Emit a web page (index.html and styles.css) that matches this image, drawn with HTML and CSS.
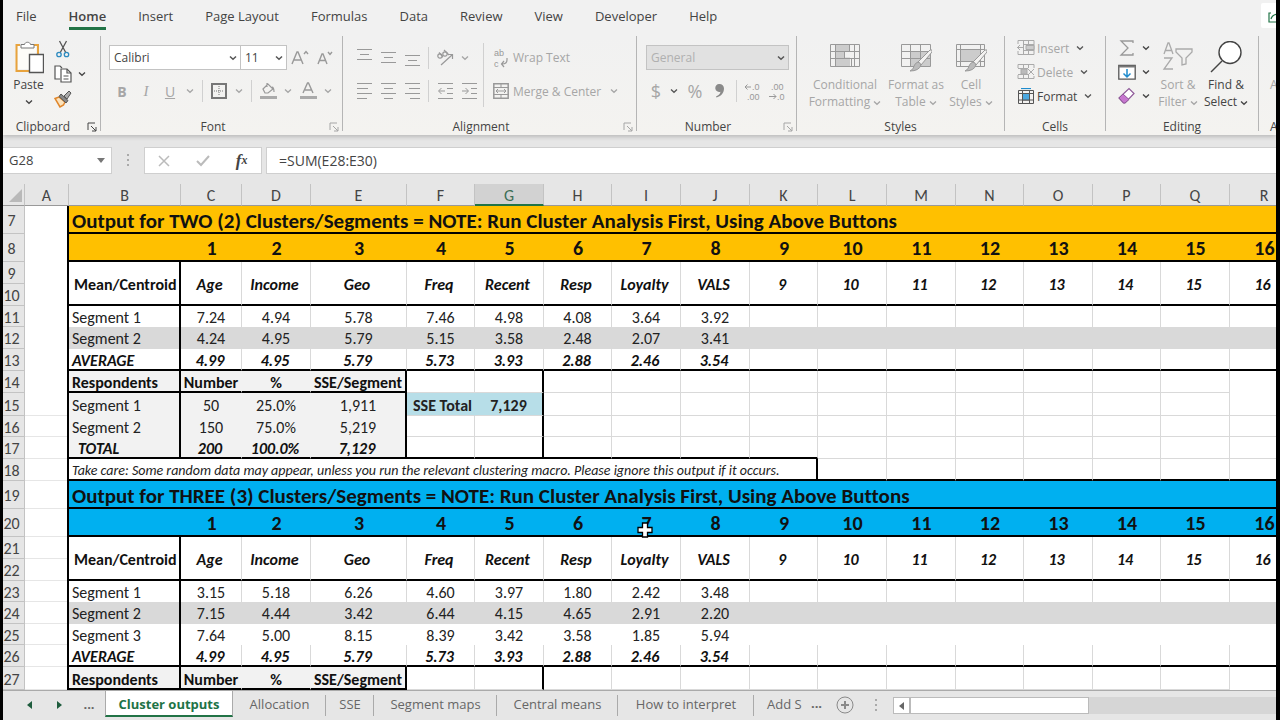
FILE: index.html
```html
<!DOCTYPE html>
<html lang="en">
<head>
<meta charset="utf-8">
<title>Cluster outputs</title>
<link rel="stylesheet" href="styles.css">
</head>
<body>
<svg class="defs" aria-hidden="true">
  <symbol id="chev" viewBox="0 0 8 6"><path d="M1 1.500 4 4.300 7 1.500" fill="none" stroke="currentColor" stroke-width="1.300"/></symbol>
  <symbol id="launch" viewBox="0 0 10 10"><path d="M1 8V1h7M4 4l5 5M9 5v4H5" fill="none" stroke="currentColor"/></symbol>
</svg>

<nav class="tabs">
  <a href="#">File</a><a href="#" class="on">Home</a><a href="#">Insert</a><a href="#">Page Layout</a><a href="#">Formulas</a><a href="#">Data</a><a href="#">Review</a><a href="#">View</a><a href="#">Developer</a><a href="#">Help</a>
  <button class="share" aria-label="Share"><svg width="14" height="14" viewBox="0 0 14 14" fill="none" stroke="#217346" stroke-width="1.2"><path d="M3 4H1v9h12M3 10c1-4 4-5 8-5M9 2l3 3-3 3"/></svg></button>
</nav>

<section class="ribbon">
  <div class="group g-clip">
    <div class="tools across">
      <button class="big paste">
        <svg width="30" height="34" viewBox="0 0 30 34" fill="none"><path d="M6 4H2.500v26H15M20 4h4v9" stroke="#e8a33d" stroke-width="2"/><path d="M4 5h18v8h-7v15H4z" fill="#fdfcf8"/><path d="M7 7V3.500h3.500C11 .5 16 .5 16.500 3.500H20V7z" fill="#fff" stroke="#777"/><path d="M15.500 13.500h14v18h-14z" fill="#fff" stroke="#555" stroke-width="1.400"/></svg>
        <span>Paste</span><svg class="chev"><use href="#chev"/></svg>
      </button>
      <div class="stack">
        <button aria-label="Cut"><svg width="18" height="18" viewBox="0 0 18 18" fill="none"><path d="M5.500 1 12 13M12.500 1 6 13" stroke="#555" stroke-width="1.300"/><circle cx="5" cy="14.500" r="2.200" stroke="#2e8bc0" stroke-width="1.300"/><circle cx="12.500" cy="14.500" r="2.200" stroke="#2e8bc0" stroke-width="1.300"/></svg></button>
        <button aria-label="Copy"><svg width="18" height="18" viewBox="0 0 18 18" fill="#fff" stroke="#555" stroke-width="1.200"><path d="M6 14H1V1h5l2 2"/><path d="M7 4h6l4 4v9H7z"/><path d="M13 4v4h4M9.500 11h5M9.500 14h5" fill="none"/></svg><svg class="chev"><use href="#chev"/></svg></button>
        <button aria-label="Format Painter"><svg width="18" height="18" viewBox="0 0 18 18"><path d="M1 8.500 5 7l6 5-1.500 3L6 17z" fill="#fbe3bd" stroke="#e0862b" stroke-width="1.500"/><path d="m5 6.500 2-2.500 7 6.500-2 2.500z" fill="#888" stroke="#555"/><path d="m10 6 5-5 2 2-4 6z" fill="#aaa" stroke="#555"/></svg></button>
      </div>
    </div>
    <div class="caption"><span>Clipboard</span><button aria-label="Clipboard options"><svg><use href="#launch"/></svg></button></div>
  </div>

  <div class="group g-font">
    <div class="tools rows">
      <div class="row pull">
        <select class="sel face" aria-label="Font"><option>Calibri</option></select><select class="sel size" aria-label="Font size"><option>11</option></select>
        <button class="w26 dim" aria-label="Increase font size"><svg width="18" height="18" viewBox="0 0 18 18" fill="none" stroke="#999" stroke-width="1.400"><path d="M1 15 6 3h1l5 12M3 11h7M13 5l2-2.500L17 5"/></svg></button><button class="w24 dim" aria-label="Decrease font size"><svg width="18" height="18" viewBox="0 0 18 18" fill="none" stroke="#999" stroke-width="1.400"><path d="M2 15 6 5h1l4 10M3.500 11.500h6M12 3l2 2.500L16 3"/></svg></button>
      </div>
      <div class="row dim">
        <button class="w24 b">B</button><button class="w24 i">I</button><button class="w24 u">U</button><button class="w16" aria-label="Underline styles"><svg class="chev"><use href="#chev"/></svg></button><i class="sep"></i>
        <button class="w24" aria-label="Borders"><svg width="16" height="16" viewBox="0 0 16 16" fill="none" stroke="#777"><path d="M1 1h14v14H1z" stroke-width="2"/><path d="M8 3v10M3 8h10" stroke-dasharray="1 1"/></svg></button><button class="w16" aria-label="Border styles"><svg class="chev"><use href="#chev"/></svg></button><i class="sep"></i>
        <button class="w24" aria-label="Fill color"><svg width="18" height="18" viewBox="0 0 18 18" fill="none" stroke="#999" stroke-width="1.200"><path d="m4 7 5-5 5 5-5 4H6zM8 1v4M13 5c2 0 2 2 2 5"/><path d="M1 15.500h17" stroke="#aaa" stroke-width="3"/></svg></button><button class="w16" aria-label="Fill colors"><svg class="chev"><use href="#chev"/></svg></button>
        <button class="w24" aria-label="Font color"><svg width="18" height="18" viewBox="0 0 18 18" fill="none" stroke="#999"><path d="m4 11 4.500-10h1L14 11M6 8h6.500" stroke-width="1.400"/><path d="M1 15.500h17" stroke="#aaa" stroke-width="3"/></svg></button><button class="w16" aria-label="Font colors"><svg class="chev"><use href="#chev"/></svg></button>
      </div>
    </div>
    <div class="caption"><span>Font</span><button class="dim" aria-label="Font options"><svg><use href="#launch"/></svg></button></div>
  </div>

  <div class="group g-align">
    <div class="tools across dim">
      <div class="rows half">
        <div class="row">
          <button class="w24" aria-label="Top align"><svg class="ln"><path d="M0 1.500h15M3 6.500h9M0 11.500h15"/></svg></button><button class="w24" aria-label="Middle align"><svg class="ln"><path d="M0 4.500h15M3 9.500h9M0 14.500h15"/></svg></button><button class="w24" aria-label="Bottom align"><svg class="ln"><path d="M0 7.500h15M3 12.500h9M0 17.500h15"/></svg></button><i class="sep"></i>
          <button class="w24" aria-label="Orientation"><svg width="18" height="18" viewBox="0 0 18 18" fill="none" stroke="#999" stroke-width="1.200"><circle cx="4" cy="7" r="2.200"/><path d="M3 3.500 7 8M8 1l5 5"/><circle cx="9" cy="5" r="2.200"/><path d="M5 16 16 6M12 5.500h4.500V10"/></svg></button><button class="w16" aria-label="Orientations"><svg class="chev"><use href="#chev"/></svg></button>
        </div>
        <div class="row">
          <button class="w24" aria-label="Align left"><svg class="ln"><path d="M0 2.500h15M0 7.500h11M0 12.500h15M0 17.500h10"/></svg></button><button class="w24" aria-label="Center"><svg class="ln"><path d="M0 2.500h15M3 7.500h9M0 12.500h15M3 17.500h9"/></svg></button><button class="w24" aria-label="Align right"><svg class="ln"><path d="M0 2.500h15M4 7.500h11M0 12.500h15M5 17.500h10"/></svg></button><i class="sep"></i>
          <button class="w24" aria-label="Decrease indent"><svg class="ln"><path d="M0 2.500h15M9 7.500h6M9 12.500h6M0 17.500h15M7 10H1M3.500 7 .5 10l3 3"/></svg></button><button class="w24" aria-label="Increase indent"><svg class="ln"><path d="M0 2.500h15M9 7.500h6M9 12.500h6M0 17.500h15M0 10h6M3.500 7l3 3-3 3"/></svg></button>
        </div>
      </div>
      <i class="sep tall"></i>
      <div class="rows">
        <div class="row"><button class="labelled"><svg width="16" height="24" viewBox="0 0 16 24"><text x="1" y="10" class="tiny">ab</text><text x="1" y="21" class="tiny">c</text><path d="M14 12v2q0 4-5 4M11 15l-2.500 3 2.500 3" fill="none" stroke="#999" stroke-width="1.200"/></svg>Wrap Text</button></div>
        <div class="row"><button class="labelled"><svg width="16" height="16" viewBox="0 0 16 16" fill="none" stroke="#999"><path d="M.8.8h14.400v14.400H.8z" stroke-width="1.500"/><path d="M0 4.500h16M0 11.500h16M8 0v4.500M8 11.500V16M3 8h10M5 6 3 8l2 2M11 6l2 2-2 2"/></svg>Merge &amp; Center<svg class="chev"><use href="#chev"/></svg></button></div>
      </div>
    </div>
    <div class="caption"><span>Alignment</span><button class="dim" aria-label="Alignment options"><svg><use href="#launch"/></svg></button></div>
  </div>

  <div class="group g-num">
    <div class="tools rows">
      <div class="row"><select class="sel format" aria-label="Number format" disabled><option>General</option></select></div>
      <div class="row dim">
        <button class="w20 money">$</button><button class="w16 dark" aria-label="Currencies"><svg class="chev"><use href="#chev"/></svg></button><button class="w26 money">%</button>
        <button class="w24" aria-label="Comma style"><svg width="10" height="14" viewBox="0 0 10 14"><path d="M4.500 0a4 4 0 1 0 1 7.800Q5 11 1 12.500l.5 1C7 12 9 8 9 4.500A4.500 4.500 0 0 0 4.500 0z" fill="#8a8a8a"/></svg></button><i class="sep"></i>
        <button class="w24" aria-label="Increase decimal"><svg width="18" height="22" viewBox="0 0 18 22"><text x="8" y="10" class="tiny">.0</text><text x="3" y="20" class="tiny">.00</text><path d="M7 7H1M3.500 4.500 1 7l2.500 2.500" fill="none" stroke="#999"/></svg></button><button class="w24" aria-label="Decrease decimal"><svg width="18" height="22" viewBox="0 0 18 22"><text x="3" y="10" class="tiny">.00</text><text x="9" y="20" class="tiny">.0</text><path d="M1 16.500h7M5.500 14l2.500 2.500L5.500 19" fill="none" stroke="#999"/></svg></button>
      </div>
    </div>
    <div class="caption"><span>Number</span><button class="dim" aria-label="Number options"><svg><use href="#launch"/></svg></button></div>
  </div>

  <div class="group g-style">
    <div class="tools across dim">
      <button class="big w84"><svg width="32" height="34" viewBox="0 0 32 34" fill="none" stroke="#999"><path d="M6 4h14v6.500h-5v6H21V25H6z" fill="#ccc" stroke="none"/><path d="M1.500 3.500h29v22h-29zM1.500 10.500h29M1.500 17.500h29M6.500 3v22M20.500 3v7.500M15.500 10.500v7M22.500 17.500v8M25.500 3v22"/></svg><span>Conditional</span><span>Formatting <svg class="chev"><use href="#chev"/></svg></span></button>
      <button class="big w58"><svg width="32" height="34" viewBox="0 0 32 34" fill="none" stroke="#999"><path d="M11 10h19v15H11z" fill="#ccc" stroke="none"/><path d="M1.500 3.500h29v22h-29zM1.500 10.500h29M1.500 17.500h29M10.500 3v22M20.500 3v22"/><path d="M18 21 30 9q3-1 2 2L21 24z" fill="#f3f2f1"/><path d="M18 21q2 0 3 3-2 6-11 6 4-2 4-5 1-3 4-4z" fill="#bbb"/></svg><span>Format as</span><span>Table <svg class="chev"><use href="#chev"/></svg></span></button>
      <button class="big w52"><svg width="32" height="34" viewBox="0 0 32 34" fill="none" stroke="#999"><path d="M6 8h20v12H6z" fill="#ccc" stroke="none"/><path d="M1.500 3.500h28v22h-28zM1.500 8.500h28M1.500 20.500h28M5.500 3v22M25.500 3v22"/><path d="M18 21 30 9q3-1 2 2L21 24z" fill="#f3f2f1"/><path d="M18 21q2 0 3 3-2 6-11 6 4-2 4-5 1-3 4-4z" fill="#bbb"/></svg><span>Cell</span><span>Styles <svg class="chev"><use href="#chev"/></svg></span></button>
    </div>
    <div class="caption"><span>Styles</span></div>
  </div>

  <div class="group g-cells">
    <div class="tools stack">
      <button class="labelled dim"><svg width="18" height="16" viewBox="0 0 18 16" fill="none" stroke="#aaa"><path d="M1 4V.5h16v14H1V11M6.500 1v14M11.500 1v14M7 4.500h10M7 10.500h10"/><path d="M9 5.500h8v4H9z" fill="#ccc"/><path d="M7 7.500H0M3 5 .5 7.500 3 10"/></svg>Insert<svg class="chev dark"><use href="#chev"/></svg></button>
      <button class="labelled dim"><svg width="18" height="16" viewBox="0 0 18 16" fill="none" stroke="#aaa"><path d="M1 4V.5h16V4M1 11v3.500h16V12M6.500 1v14M11.500 1v3M11.500 11v4M1 4.500h10M1 10.500h10"/><path d="M4 5h6v5H4z" fill="#bbb"/><path d="m11 5 6 6M17 5l-6 6"/></svg>Delete<svg class="chev dark"><use href="#chev"/></svg></button>
      <button class="labelled"><svg width="18" height="16" viewBox="0 0 18 16" fill="none" stroke="#555"><path d="M1.500 2.500h15v13h-15zM5.500 3v12M12.500 3v12M2 5.500h15M2 12h15"/><path d="M5.500 5.500h7V12h-7z" fill="#4aa8e0"/><path d="M4 .5h10" stroke="#1e8bcd" stroke-width="1.200"/></svg>Format<svg class="chev dark"><use href="#chev"/></svg></button>
    </div>
    <div class="caption"><span>Cells</span></div>
  </div>

  <div class="group g-edit">
    <div class="tools across">
      <div class="stack">
        <button aria-label="AutoSum"><svg width="18" height="18" viewBox="0 0 18 18" fill="none" stroke="#999" stroke-width="1.300"><path d="M15 4V2H3l7 7-7 7h12v-2"/></svg><svg class="chev"><use href="#chev"/></svg></button>
        <button aria-label="Fill"><svg width="18" height="16" viewBox="0 0 18 16" fill="none"><path d="M.8 1.500h16.400v13.700H.8z" fill="#fff" stroke="#555" stroke-width="1.300"/><path d="M1 2.500h16" stroke="#777" stroke-width="2"/><path d="M9 5v8M5.500 9.500 9 13l3.500-3.500" stroke="#1e8bcd" stroke-width="1.500"/></svg><svg class="chev"><use href="#chev"/></svg></button>
        <button aria-label="Clear"><svg width="18" height="18" viewBox="0 0 18 18"><path d="M1 11 11 1.500l5 5L7 16H5.500z" fill="#fff" stroke="#8f5a99" stroke-width="1.200"/><path d="m1 11 4-4 6 5.500L7 16H5.500z" fill="#c777cf" stroke="#8f5a99"/></svg><svg class="chev"><use href="#chev"/></svg></button>
      </div>
      <button class="big w48 dim"><svg width="32" height="34" viewBox="0 0 32 34" fill="none" stroke="#aaa" stroke-width="1.300"><path d="m2 13 4-11h1l4 11M3.500 9.500h6M2 17h8L2 28h9"/><path d="M14 8h16v3l-6 6v6l-4 1v-7l-6-6z"/></svg><span>Sort &amp;</span><span>Filter <svg class="chev"><use href="#chev"/></svg></span></button>
      <button class="big w48"><svg width="32" height="34" viewBox="0 0 32 34" fill="none" stroke="#444" stroke-width="1.400"><circle cx="20" cy="11.500" r="11" fill="#fff"/><path d="M12 20 1 31"/></svg><span>Find &amp;</span><span>Select <svg class="chev"><use href="#chev"/></svg></span></button>
    </div>
    <div class="caption"><span>Editing</span></div>
  </div>

  <div class="group g-last">
    <div class="tools across dim"><button class="big"><svg width="32" height="34"></svg><span>Analyze</span><span class="indent">Data</span></button></div>
    <div class="caption"><span>Analysis</span></div>
  </div>
</section>

<section class="formula">
  <div class="namebox"><input aria-label="Name box" value="G28"><button aria-label="Names"><svg width="8" height="5"><path d="M0 0h8L4 5z" fill="#777"/></svg></button></div>
  <span class="dots"></span>
  <div class="fx"><button aria-label="Cancel"><svg width="12" height="12" viewBox="0 0 12 12"><path d="m1 1 10 10M11 1 1 11" stroke="#bbb" stroke-width="1.500"/></svg></button><button aria-label="Enter"><svg width="14" height="12" viewBox="0 0 14 12" fill="none"><path d="m1 6 4 4 8-9" stroke="#bbb" stroke-width="2"/></svg></button><button class="fn" aria-label="Insert function">f<small>x</small></button></div>
  <input class="expr" aria-label="Formula" value="=SUM(E28:E30)">
</section>

<main class="sheet">
<table>
<colgroup><col class="c22"><col class="c44"><col class="c112"><col class="c61"><col class="c69"><col class="c96"><col class="c68"><col class="c69"><col class="c68"><col class="c69"><col class="c69"><col class="c68"><col class="c69"><col class="c69"><col class="c68"><col class="c69"><col class="c68"><col class="c69"><col class="c69"></colgroup>
<thead><tr><th class="corner"><svg width="13" height="13"><path d="M13 0v13H0z" fill="#b9b9b9"/></svg></th><th>A<th>B<th>C<th>D<th>E<th>F<th class="picked">G<th>H<th>I<th>J<th>K<th>L<th>M<th>N<th>O<th>P<th>Q<th>R</tr></thead>
<tbody>
<tr class="title gold"><th>7<td><td colspan="17">Output for TWO (2) Clusters/Segments = NOTE: Run Cluster Analysis First, Using Above Buttons</tr>
<tr class="index gold"><th>8<td><td><td>1<td>2<td>3<td>4<td>5<td>6<td>7<td>8<td>9<td>10<td>11<td>12<td>13<td>14<td>15<td>16</tr>
<tr class="names"><th>9<td><td rowspan="2">Mean/Centroid<td rowspan="2">Age<td rowspan="2">Income<td rowspan="2">Geo<td rowspan="2">Freq<td rowspan="2">Recent<td rowspan="2">Resp<td rowspan="2">Loyalty<td rowspan="2">VALS<td rowspan="2">9<td rowspan="2">10<td rowspan="2">11<td rowspan="2">12<td rowspan="2">13<td rowspan="2">14<td rowspan="2">15<td rowspan="2">16</tr>
<tr><th>10<td></tr>
<tr class="data short"><th>11<td><td>Segment 1<td>7.24<td>4.94<td>5.78<td>7.46<td>4.98<td>4.08<td>3.64<td>3.92<td><td><td><td><td><td><td><td></tr>
<tr class="data band"><th>12<td><td>Segment 2<td>4.24<td>4.95<td>5.79<td>5.15<td>3.58<td>2.48<td>2.07<td>3.41<td><td><td><td><td><td><td><td></tr>
<tr class="data avg"><th>13<td><td>AVERAGE<td>4.99<td>4.95<td>5.79<td>5.73<td>3.93<td>2.88<td>2.46<td>3.54<td><td><td><td><td><td><td><td></tr>
<tr class="resp lead"><th>14<td><td>Respondents<td>Number<td>%<td>SSE/Segment<td><td><td><td><td><td><td><td><td><td><td><td></tr>
<tr class="resp sse high"><th>15<td><td>Segment 1<td>50<td>25.0%<td>1,911<td>SSE Total<td>7,129<td><td><td><td><td><td><td><td><td><td><td></tr>
<tr class="resp short"><th>16<td><td>Segment 2<td>150<td>75.0%<td>5,219<td><td><td><td><td><td><td><td><td><td><td><td><td></tr>
<tr class="resp total"><th>17<td><td>TOTAL<td>200<td>100.0%<td>7,129<td><td><td><td><td><td><td><td><td><td><td><td><td></tr>
<tr class="note"><th>18<td><td colspan="10">Take care: Some random data may appear, unless you run the relevant clustering macro. Please ignore this output if it occurs.<td><td><td><td><td><td><td></tr>
<tr class="title blue"><th>19<td><td colspan="17">Output for THREE (3) Clusters/Segments = NOTE: Run Cluster Analysis First, Using Above Buttons</tr>
<tr class="index blue"><th>20<td><td><td>1<td>2<td>3<td>4<td>5<td>6<td class="under">7<svg class="cursor" width="16" height="16" viewBox="0 0 16 16"><path d="M5.500 1h5v4.500H15v5h-4.500V15h-5v-4.500H1v-5h4.500z" fill="#fff" stroke="#000" stroke-width="1.300"/></svg><td>8<td>9<td>10<td>11<td>12<td>13<td>14<td>15<td>16</tr>
<tr class="names"><th>21<td><td rowspan="2">Mean/Centroid<td rowspan="2">Age<td rowspan="2">Income<td rowspan="2">Geo<td rowspan="2">Freq<td rowspan="2">Recent<td rowspan="2">Resp<td rowspan="2">Loyalty<td rowspan="2">VALS<td rowspan="2">9<td rowspan="2">10<td rowspan="2">11<td rowspan="2">12<td rowspan="2">13<td rowspan="2">14<td rowspan="2">15<td rowspan="2">16</tr>
<tr><th>22<td></tr>
<tr class="data short"><th>23<td><td>Segment 1<td>3.15<td>5.18<td>6.26<td>4.60<td>3.97<td>1.80<td>2.42<td>3.48<td><td><td><td><td><td><td><td></tr>
<tr class="data band"><th>24<td><td>Segment 2<td>7.15<td>4.44<td>3.42<td>6.44<td>4.15<td>4.65<td>2.91<td>2.20<td><td><td><td><td><td><td><td></tr>
<tr class="data plain short"><th>25<td><td>Segment 3<td>7.64<td>5.00<td>8.15<td>8.39<td>3.42<td>3.58<td>1.85<td>5.94<td><td><td><td><td><td><td><td></tr>
<tr class="data avg"><th>26<td><td>AVERAGE<td>4.99<td>4.95<td>5.79<td>5.73<td>3.93<td>2.88<td>2.46<td>3.54<td><td><td><td><td><td><td><td></tr>
<tr class="resp lead high"><th>27<td><td>Respondents<td>Number<td>%<td>SSE/Segment<td><td class="active"><td><td><td><td><td><td><td><td><td><td></tr>
</tbody>
</table>
</main>

<footer class="sheets">
  <button class="arrow" aria-label="Previous sheet"><svg width="5" height="8"><path d="M5 0v8L0 4z" fill="#1e5c3d"/></svg></button><button class="arrow" aria-label="Next sheet"><svg width="5" height="8"><path d="M0 0v8l5-4z" fill="#1e5c3d"/></svg></button><button class="arrow more">...</button>
  <a href="#" class="on">Cluster outputs</a><a href="#" class="t93">Allocation</a><a href="#" class="t48">SSE</a><a href="#" class="t123">Segment maps</a><a href="#" class="t121">Central means</a><a href="#" class="t136">How to interpret</a><a href="#" class="cut">Add S</a>
  <button class="dotsmore">...</button>
  <button class="plus" aria-label="New sheet"><svg width="18" height="18" viewBox="0 0 18 18" fill="none" stroke="#8a8a8a"><circle cx="9" cy="9" r="8"/><path d="M9 5v8M5 9h8" stroke-width="2"/></svg></button>
  <span class="dots"></span>
  <div class="scroll"><button aria-label="Scroll left"><svg width="5" height="8"><path d="M5 0v8L0 4z" fill="#666"/></svg></button><div class="thumb"></div></div>
</footer>
</body>
</html>
```
FILE: styles.css
```css
* { box-sizing: border-box; }
body {
  margin: 0;
  height: 100vh;
  display: flex;
  flex-direction: column;
  overflow: hidden;
  border: solid #000;
  border-width: 0 4px 0 3px;
  background: #e6e6e6;
  color: #444;
  font: 12px/17px "Open Sans", "Noto Sans", sans-serif;
}
button { font: inherit; color: inherit; background: none; border: 0; padding: 0; display: flex; align-items: center; justify-content: center; }
a { color: inherit; text-decoration: none; }
.defs { position: absolute; width: 0; height: 0; }
.chev { width: 8px; height: 6px; flex: none; }

.tabs { flex: none; display: flex; gap: 32px; height: 36px; padding-left: 13px; background: #f1f1f1; font-size: 13px; overflow: hidden; }
.tabs a { height: 30px; padding-top: 8px; white-space: nowrap; }
.tabs .on { font-weight: 600; border-bottom: 3px solid #217346; }
.share { flex: none; width: 40px; height: 25px; margin: 3px -25px 0 auto; padding-left: 7px; justify-content: flex-start; background: #fff; border-radius: 2px; }

.ribbon { flex: none; display: flex; height: 99px; padding-bottom: 4px; background: linear-gradient(#f1f1f1, #f4f3f0); box-shadow: 0 2px 4px #bbb; overflow: hidden; position: relative; clip-path: inset(0 0 -6px 0); }
.group { flex: none; display: flex; flex-direction: column; border-right: 1px solid #b5b5b5; }
.tools { flex: 1; }
.across { display: flex; }
.rows { display: flex; flex-direction: column; gap: 10px; padding: 9px 0 0 9px; }
.row { display: flex; align-items: center; height: 25px; }
.row + .row { height: 22px; }
.caption { display: flex; align-items: center; height: 17px; margin-bottom: -4px; font-weight: 500; }
.caption span { flex: 1; text-align: center; }
.caption button { width: 17px; }
.caption svg { width: 10px; height: 10px; }
.dim { color: #a6a6a6; }
.dark { color: #555; }
.g-clip { width: 98px; }
.g-font { width: 242px; }
.g-align { width: 294px; }
.g-num { width: 160px; }
.g-style { width: 208px; }
.g-cells { width: 101px; }
.g-edit { width: 153px; }
.g-last { width: 70px; padding-left: 11px; border-right: 0; }
.g-last .big { align-items: flex-start; }
.g-last .indent { padding-left: 8px; }
.g-last .caption span { text-align: left; }

.big { flex-direction: column; justify-content: flex-start; padding-top: 5px; white-space: nowrap; }
.big > svg:first-child { margin-bottom: 1px; flex: none; }
.big > .chev { margin-top: 6px; }
.paste { width: 51px; }
.stack { display: flex; flex-direction: column; gap: 7px; padding-top: 4px; }
.stack button { height: 18px; gap: 6px; justify-content: flex-start; }
.g-cells .stack, .g-edit .stack { padding: 3px 0 0 12px; gap: 6px; }
.g-cells .stack button { gap: 2px; }
.g-edit .stack { width: 48px; }
.w16 { width: 16px; } .w20 { width: 20px; } .w24 { width: 24px; } .w26 { width: 26px; }
.w48 { width: 48px; } .w52 { width: 52px; } .w58 { width: 58px; } .w84 { width: 84px; }
.g-style .tools { padding-left: 6px; }
.sep { width: 1px; height: 22px; margin: 0 4px; background: #d0d0d0; flex: none; }
.tall { height: 64px; margin: 7px 0 0; }
.half { width: 140px; }
.labelled { gap: 4px; white-space: nowrap; }
.labelled .chev { margin-left: 5px; }
.ln { width: 15px; height: 20px; fill: none; stroke: #999; }
.tiny { font: 9px "Liberation Sans", sans-serif; fill: #999; }
.b { font-weight: 700; font-size: 14px; }
.i { font: italic 15px "Liberation Serif", serif; }
.u { font-size: 14px; text-decoration: underline; }
.money { font-size: 18px; }

.sel {
  appearance: none;
  height: 25px;
  padding: 0 4px;
  border: 1px solid #c3c3c3;
  border-radius: 0;
  color: #444;
  font: inherit;
  background: #fff url("data:image/svg+xml,%3Csvg xmlns='http://www.w3.org/2000/svg' width='8' height='6'%3E%3Cpath d='M1 1.500 4 4.300 7 1.500' fill='none' stroke='%23555' stroke-width='1.500'/%3E%3C/svg%3E") no-repeat right 3px center;
}
.face { width: 132px; }
.size { width: 47px; margin-left: -1px; }
.pull { margin-left: -1px; }
.format { width: 143px; background-color: #e1e1e1; color: #b0b0b0; opacity: 1; }

.formula { flex: none; display: flex; height: 49px; padding: 12px 0 10px; font-size: 13px; }
.formula input { border: 0; padding: 0; font: inherit; color: inherit; background: #fff; min-width: 0; }
.namebox, .fx, .formula .expr { border: 1px solid #cfcfcf; background: #fff; height: 27px; }
.namebox { width: 109px; display: flex; padding: 0 6px; border-left: 0; }
.namebox input { flex: 1; }
.dots { width: 2px; height: 14px; margin: 7px 15px; background: repeating-linear-gradient(#aaa 0 2px, transparent 2px 5px); flex: none; }
.fx { width: 118px; display: flex; justify-content: space-around; margin-right: 4px; }
.fx button { width: 30px; }
.fx .fn { font: italic 700 17px "Liberation Serif", serif; }
.fn small { font-size: 12px; }
.formula .expr { flex: 1; padding-left: 12px; border-right: 0; font-size: 14px; }

.sheet { flex: 1; overflow: hidden; background: #fff; color: #222; font: 16px/17px Carlito, Calibri, Lato, sans-serif; font-variant-ligatures: none; }
table { table-layout: fixed; width: 1296px; border-collapse: separate; border-spacing: 0; }
.c22 { width: 22px; } .c44 { width: 44px; } .c61 { width: 61px; } .c68 { width: 68px; } .c69 { width: 69px; } .c96 { width: 96px; } .c112 { width: 112px; }
tr { height: 22px; }
.short { height: 21px; }
.high { height: 23px; }
.title, .index { height: 28px; }
th, td { padding: 0; text-align: center; white-space: nowrap; overflow: hidden; }
th { background: #e6e6e6; font-weight: 400; color: #444; border: solid #c3c3c3; border-width: 0 1px 1px 0; }
thead th { height: 21px; padding-top: 2px; border-bottom-color: #999; }
tbody th { padding: 2px 4px 0 0; }
.corner svg { display: block; margin: 0 0 0 6px; }
thead .picked { background: #d2d2d2; color: #3c6e55; border-bottom: 2px solid #217346; }
td { padding-top: 1px; border-right: 1px solid #d9d9d9; }
.avg td, .total td, .lead td, .note td, .index td, .names td, .sse td:nth-child(n+7) { padding-top: 3px; }
.title td { padding-top: 4px; }
td:nth-child(2) { border-right: 2px solid #000; }
td:nth-child(3) { text-align: left; padding-left: 3px; }
.title td:nth-child(3), .index td:nth-child(n+3), .data.avg td:nth-child(n+3), .names td:nth-child(n+3) { border-bottom: 2px solid #000; }
.title, .index { font-weight: 700; color: #111; font-size: 20px; }
.title td { font-size: 21px; }
.title th, .index th { font-size: 16px; }
.gold td:nth-child(n+3) { background: #ffc000; border-right: 0; }
.blue td:nth-child(n+3) { background: #00b0f0; border-right: 0; }
.names td:nth-child(n+3) { font-weight: 700; font-style: italic; color: #111; }
.names td:nth-child(n+4) { padding-right: 3px; }
.names td:nth-child(3) { font-style: normal; padding-left: 5px; }
.names td:nth-child(3), .data td:nth-child(3), .resp td:nth-child(3) { border-right: 2px solid #000; }
.band td:nth-child(n+3) { background: #d9d9d9; border-right-color: #d9d9d9; }
.band td:nth-child(3) { border-right-color: #000; }
.plain td:nth-child(n+4) { border-right-color: #fff; }
.avg td, .total td { font-weight: 700; font-style: italic; color: #111; }
.avg td:nth-child(n+4), .total td:nth-child(n+4) { padding-right: 2px; }
.resp td:nth-child(n+7) { border-bottom: 1px solid #d9d9d9; }
.resp td:nth-child(-n+6):nth-child(n+3) { background: #f2f2f2; }
.resp td:nth-child(4), .resp td:nth-child(5) { border-right-color: #f2f2f2; }
.resp td:nth-child(6), .resp td:nth-child(8) { border-right: 2px solid #000; }
.lead td { font-weight: 700; color: #111; }
.lead td:nth-child(-n+6):nth-child(n+3) { border-bottom: 2px solid #000; }
.sse td:nth-child(7), .sse td:nth-child(8) { background: #b7dee8; font-weight: 700; border-right-color: #b7dee8; }
.sse td:nth-child(7) { padding-left: 4px; }
.sse td:nth-child(8) { border-right-color: #000; }
.total td:nth-child(-n+12):nth-child(n+3) { border-bottom: 2px solid #000; }
.resp.total td:nth-child(3) { padding-left: 9px; }
.note td:nth-child(n+3) { border-bottom: 2px solid #000; }
.note td:nth-child(3) { border-right: 2px solid #000; font-size: 14px; font-style: italic; }
.sse td:nth-child(2), .sse ~ tr td:nth-child(2) { box-shadow: inset 0 -1px #e6e6e6; }
.resp .active { border-bottom: 1px solid #217346; }
.under { position: relative; overflow: visible; }
.cursor { position: absolute; left: 25px; top: 13px; z-index: 1; }

.sheets { flex: none; display: flex; height: 30px; border-top: 1px solid #aaa; background: #e6e6e6; color: #666; font-size: 13px; line-height: 27px; white-space: nowrap; }
.arrow { width: 30px; margin-top: -2px; }
.arrow:first-child { margin-left: 11px; }
.more, .dotsmore { font-weight: 700; }
.sheets a { height: 26px; text-align: center; overflow: hidden; }
.sheets a:not(.on):not(.cut) { background: linear-gradient(#aaa, #aaa) no-repeat right 4px / 1px 21px; }
.sheets .on { width: 128px; margin-left: 1px; background: #fff; color: #217346; font-weight: 700; border: solid #aaa; border-width: 0 1px 0; border-bottom: 2px solid #217346; }
.t93 { width: 93px; } .t48 { width: 48px; } .t123 { width: 123px; } .t121 { width: 121px; } .t136 { width: 136px; }
.sheets .cut { width: 48px; padding-left: 13px; text-align: left; }
.dotsmore { width: 29px; margin-bottom: 4px; }
.plus { width: 28px; margin-bottom: 2px; }
.sheets .dots { margin: 8px 16px 0; }
.scroll { flex: 1; display: flex; height: 17px; margin-top: 6px; background: #d6d6d6; }
.scroll button { width: 17px; background: #fff; border: 1px solid #bbb; }
.thumb { width: 179px; background: #fff; border: 1px solid #bbb; }
```
